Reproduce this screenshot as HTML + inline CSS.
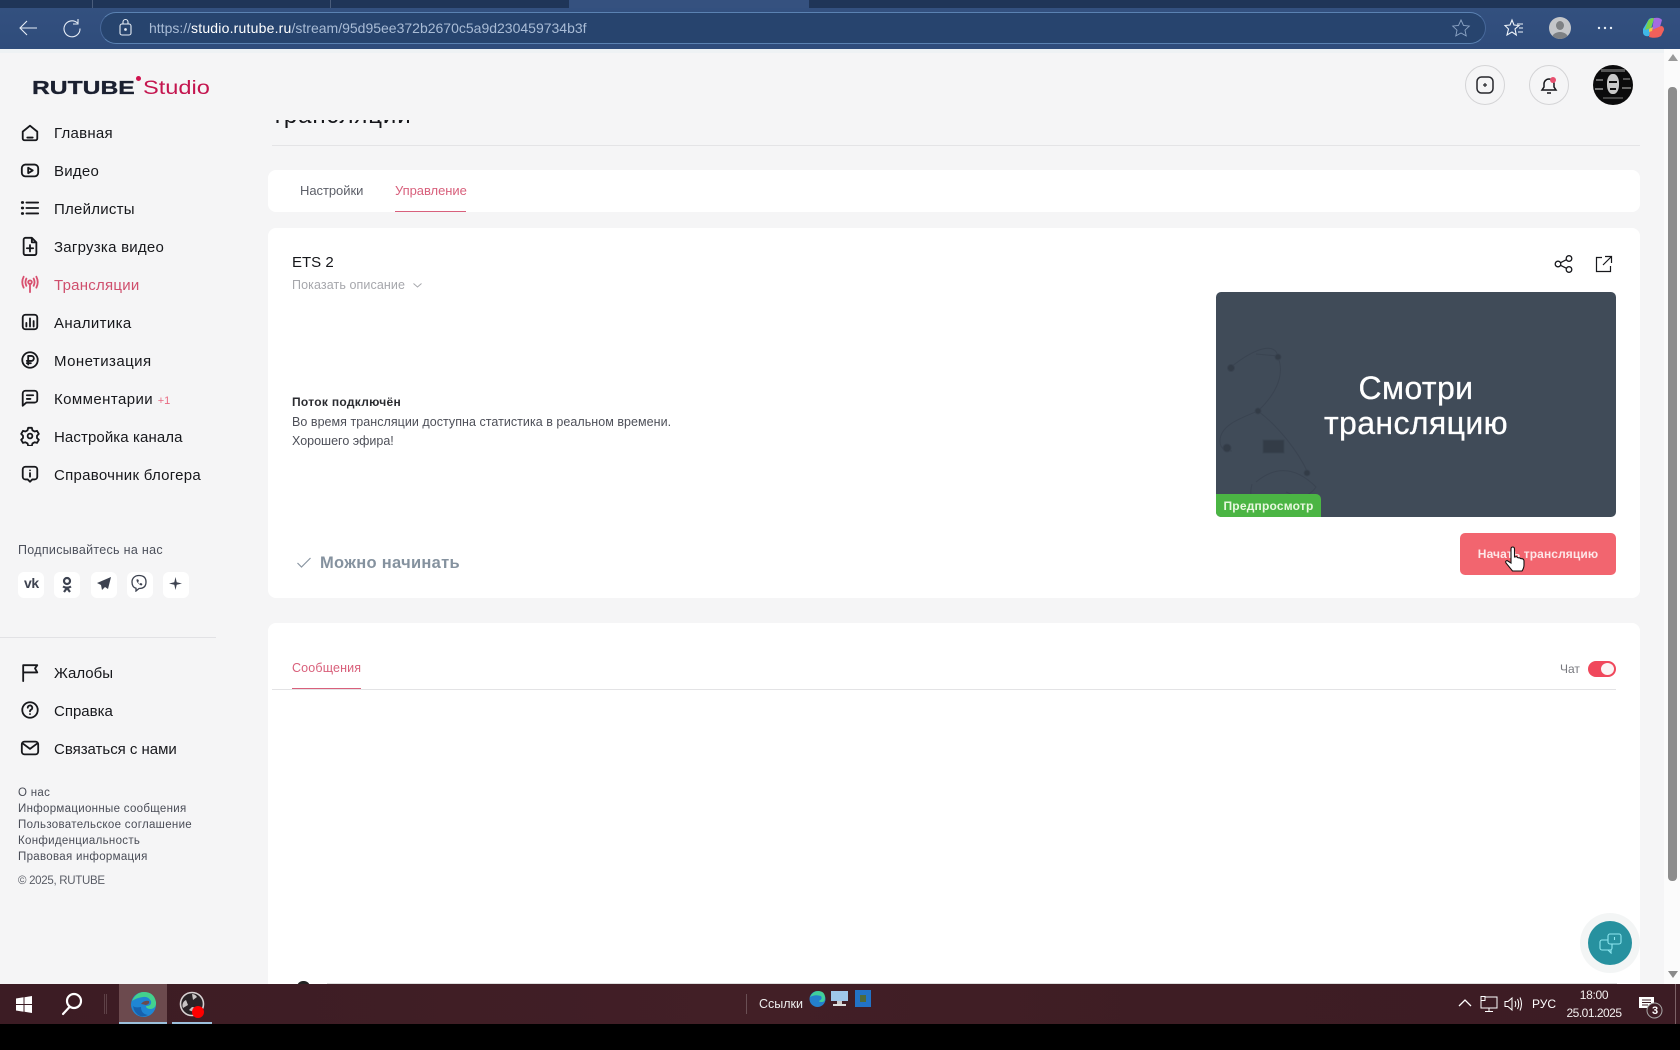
<!DOCTYPE html>
<html lang="ru"><head><meta charset="utf-8"><title>RUTUBE Studio</title>
<style>
*{box-sizing:border-box}
html,body{margin:0;padding:0;width:1680px;height:1050px;overflow:hidden;background:#f5f5f6;font-family:"Liberation Sans","Noto Sans CJK SC",sans-serif}
.a{position:absolute;white-space:nowrap}
.t{position:absolute;white-space:nowrap;line-height:20px;height:20px}
.nav{font-size:15px;color:#17181c;left:54px;letter-spacing:.25px}
.ic{position:absolute;left:20px;width:20px;height:20px;fill:none;stroke:#17181c;stroke-width:2;stroke-linecap:round;stroke-linejoin:round}
.foot{font-size:11.5px;color:#4a4d57;left:18px;letter-spacing:.31px}
.soc{position:absolute;top:572px;width:26px;height:26px;background:#fff;border-radius:6px}
.card{position:absolute;left:268px;width:1372px;background:#fff;border-radius:8px}
</style></head><body>
<div class="a" style="left:0;top:0;width:1680px;height:8px;background:#1f3558"></div>
<div class="a" style="left:569px;top:0;width:240px;height:8px;background:#35517f"></div>
<div class="a" style="left:92px;top:0;width:1px;height:8px;background:#4a5d7c"></div>
<div class="a" style="left:330px;top:0;width:1px;height:8px;background:#4a5d7c"></div>
<div class="a" style="left:0;top:8px;width:1680px;height:41px;background:linear-gradient(#33507f,#2f4c7b)"></div>
<div class="a" style="left:100px;top:12px;width:1386px;height:32px;background:#27446e;border:1px solid #5b82b2;border-left-color:#47689a;border-right-color:#47689a;border-radius:16px"></div>
<svg class="a" style="left:16px;top:16px" width="24" height="24" fill="none" stroke="#e6edf6" stroke-width="1.1"><path d="M21 12H4M11 5l-7 7 7 7"/></svg>
<svg class="a" style="left:60px;top:16px" width="24" height="24" fill="none" stroke="#e6edf6" stroke-width="1.100"><path d="M17.500 7a8 8 0 1 0 2.500 5.500M18 3v5h-5"/></svg>
<svg class="a" style="left:117px;top:17px" width="18" height="20" fill="none" stroke="#e6edf6" stroke-width="1.100"><rect x="3" y="7" width="11" height="11" rx="2"/><path d="M6 7V5a2.500 2.500 0 0 1 5 0v2"/><circle cx="8.500" cy="12.500" r=".8" fill="#e6edf6"/></svg>
<div class="t" style="left:149px;top:18px;font-size:14px;color:#a9bcd6;letter-spacing:0">https://<span style="color:#fff;letter-spacing:.2px">studio.rutube.ru</span>/stream/95d95ee372b2670c5a9d230459734b3f</div>
<svg class="a" style="left:1451px;top:18px" width="20" height="20" fill="none" stroke="#8ea6c6" stroke-width=".9"><path d="M10 2l2.500 5.400 5.800.7-4.300 4 1.200 5.800L10 15l-5.200 2.900L6 12.100l-4.300-4 5.800-.7z"/></svg>
<svg class="a" style="left:1503px;top:17px" width="22" height="22" fill="none" stroke="#f0f5fb" stroke-width="1.100"><path d="M9 3l2 5 5 .5-4 3.500 1.300 6L9 15l-5 3 1.500-6L2 8.500 7 8z"/><path d="M14 7h6M16 11h4M15 15h5"/></svg>
<div class="a" style="left:1549px;top:17px;width:22px;height:22px;border-radius:50%;background:#c4c6c9;overflow:hidden"><div class="a" style="left:7px;top:4px;width:8px;height:9px;border-radius:50%;background:#7e8184"></div><div class="a" style="left:3px;top:15px;width:16px;height:12px;border-radius:50%;background:#7e8184"></div></div>
<svg class="a" style="left:1596px;top:24px" width="18" height="8" fill="#eaf0f8"><circle cx="3" cy="4" r="1.200"/><circle cx="9" cy="4" r="1.200"/><circle cx="15" cy="4" r="1.200"/></svg>
<svg class="a" style="left:1641px;top:16px" width="24" height="24"><path d="M2 13 L8 3 q3-2 5 0 L8 20 q-5 1-6-3z" fill="#3fb8e8"/><path d="M7 5 q2-3 6-3 l-3 10 -6 2z" fill="#7ad04a"/><path d="M13 2 q6-1 8 2 l-2 7-8 3z" fill="#a46be0"/><path d="M9 15 l11-5 q3 0 3 4 l-3 6 q-5 3-12 1z" fill="#f0605a"/><path d="M8 13 l4-2 -1 4 -3 1z" fill="#f2c744"/></svg>

<div class="a" style="left:0;top:49px;width:1680px;height:4px;background:#eef2f4"></div>
<!-- scrollbar -->
<div class="a" style="left:1664px;top:49px;width:16px;height:935px;background:#fbfbfb"></div>
<div class="a" style="left:1668px;top:87px;width:9px;height:794px;border-radius:4px;background:#8d8d8d"></div>
<svg class="a" style="left:1667px;top:53px" width="12" height="9" fill="#9a9a9a"><path d="M1 8 6 1l5 7z"/></svg>
<svg class="a" style="left:1667px;top:970px" width="12" height="9" fill="#8a8a8a"><path d="M1 1l5 7 5-7z"/></svg>

<!-- logo -->
<div class="t" style="left:32px;top:76px;height:24px;line-height:24px;font-size:18px;font-weight:700;color:#1b2030;transform:scaleX(1.37);transform-origin:left;-webkit-text-stroke:.3px #1b2030">RUTUBE</div>
<div class="t" style="left:143px;top:75.500px;height:24px;line-height:24px;font-size:19.500px;color:#c4154f;transform:scaleX(1.21);transform-origin:left">Studio</div>
<div class="a" style="left:135.500px;top:75.500px;width:5px;height:5px;border-radius:50%;background:#d0124e"></div>

<!-- header buttons -->
<div class="a" style="left:1465px;top:65px;width:40px;height:40px;border-radius:50%;border:1px solid #d4d4d6"></div>
<svg class="a" style="left:1475px;top:75px" width="20" height="20" fill="none" stroke="#26272c" stroke-width="1.500"><rect x="2" y="2" width="16" height="16" rx="4.500"/><path d="M8 10h4M10 8v4" stroke-width="1.200"/></svg>
<div class="a" style="left:1529px;top:65px;width:40px;height:40px;border-radius:50%;border:1px solid #d4d4d6"></div>
<svg class="a" style="left:1539px;top:75px" width="20" height="20" fill="none" stroke="#16171b" stroke-width="1.500"><path d="M3 15h14l-2-3V9a5 5 0 0 0-10 0v3zM8 18h4"/><circle cx="14" cy="5" r="3" fill="#e8506f" stroke="none"/></svg>
<div class="a" style="left:1593px;top:65px;width:40px;height:40px;border-radius:50%;background:#0b0b0c;overflow:hidden">
<div class="a" style="left:14px;top:9px;width:12px;height:20px;border-radius:45%;background:#c9c9c9"></div>
<div class="a" style="left:8px;top:4px;width:24px;height:3px;background:#555"></div>
<div class="a" style="left:16px;top:16px;width:8px;height:2px;background:#111"></div>
<div class="a" style="left:17px;top:23px;width:6px;height:2px;background:#111"></div>
<div class="a" style="left:3px;top:14px;width:7px;height:2px;background:#666"></div>
<div class="a" style="left:2px;top:23px;width:8px;height:2px;background:#777"></div>
<div class="a" style="left:30px;top:13px;width:7px;height:2px;background:#555"></div>
<div class="a" style="left:29px;top:22px;width:9px;height:2px;background:#666"></div>
<div class="a" style="left:10px;top:32px;width:20px;height:2px;background:#444"></div>
</div>

<!-- sidebar nav -->
<svg class="ic" style="top:123px" viewBox="0 0 22 22"><path d="M3 9.500 11 3l8 6.500V17a2 2 0 0 1-2 2H5a2 2 0 0 1-2-2zM8 16h6"/></svg>
<div class="t nav" style="top:124px">Главная</div>
<svg class="ic" style="top:160px" viewBox="0 0 22 22"><rect x="2" y="5" width="18" height="13" rx="4"/><path d="M9 8.500v6l5-3z"/></svg>
<div class="t nav" style="top:162px">Видео</div>
<svg class="ic" style="top:198px" viewBox="0 0 22 22"><path d="M7 5h13M7 11h13M7 17h13"/><path d="M2.500 5h.5M2.500 11h.5M2.500 17h.5" stroke-width="3"/></svg>
<div class="t nav" style="top:200px">Плейлисты</div>
<svg class="ic" style="top:236px" viewBox="0 0 22 22"><path d="M4 4a2 2 0 0 1 2-2h7l5 5v12a2 2 0 0 1-2 2H6a2 2 0 0 1-2-2zM13 2v5h5M11 10v7M7.500 13.500h7"/></svg>
<div class="t nav" style="top:238px">Загрузка видео</div>
<svg class="ic" style="top:274px;stroke:#d8506f" viewBox="0 0 22 22"><circle cx="11" cy="9" r="2"/><path d="M11 11v9M7 5q-2 4 0 8M15 5q2 4 0 8M4 3q-3 6 0 12M18 3q3 6 0 12"/></svg>
<div class="t nav" style="top:276px;color:#cf4f6d">Трансляции</div>
<svg class="ic" style="top:312px" viewBox="0 0 22 22"><rect x="3" y="3" width="16" height="16" rx="3"/><path d="M7 16v-4M11 16V7M15 16v-6"/></svg>
<div class="t nav" style="top:314px;letter-spacing:.37px">Аналитика</div>
<svg class="ic" style="top:350px" viewBox="0 0 22 22"><circle cx="11" cy="11" r="8.500"/><path d="M9 16V6.500h3.500a2.700 2.700 0 0 1 0 5.500H7.500M7.500 14.500H12"/></svg>
<div class="t nav" style="top:352px;letter-spacing:.44px">Монетизация</div>
<svg class="ic" style="top:388px" viewBox="0 0 22 22"><path d="M3 6a3 3 0 0 1 3-3h10a3 3 0 0 1 3 3v7a3 3 0 0 1-3 3H7l-4 3.500zM7.500 8h7M7.500 12h4"/></svg>
<div class="t nav" style="top:390px;letter-spacing:.42px">Комментарии <span style="font-size:11px;color:#e86a82;margin-left:0;letter-spacing:0">+1</span></div>
<svg class="ic" style="top:426px" viewBox="0 0 22 22"><path d="M9 2.500h4l.7 2.700 2.300 1.300 2.700-.7 2 3.400-2 2v2.600l2 1.900-2 3.400-2.700-.7-2.300 1.300-.7 2.600H9l-.7-2.600-2.300-1.300-2.700.7-2-3.400 2-2v-2.500l-2-2 2-3.400 2.700.7 2.300-1.300z" transform="translate(0 -.500)"/><circle cx="11" cy="11" r="2.600"/></svg>
<div class="t nav" style="top:428px;letter-spacing:.1px">Настройка канала</div>
<svg class="ic" style="top:464px" viewBox="0 0 22 22"><path d="M6 3h10a3 3 0 0 1 3 3v8a3 3 0 0 1-3 3h-2.500L11 19.500 8.500 17H6a3 3 0 0 1-3-3V6a3 3 0 0 1 3-3zM11 10v4M11 7h.01"/></svg>
<div class="t nav" style="top:466px;letter-spacing:.28px">Справочник блогера</div>

<div class="t" style="left:18px;top:540px;font-size:12.500px;color:#4c505b;letter-spacing:.3px">Подписывайтесь на нас</div>
<div class="soc" style="left:18px"></div><div class="soc" style="left:54px"></div><div class="soc" style="left:91px"></div><div class="soc" style="left:127px"></div><div class="soc" style="left:163px"></div>
<div class="t" style="left:24px;top:573px;font-size:14px;font-weight:700;color:#3d4250;letter-spacing:-.4px">vk</div>
<svg class="a" style="left:61px;top:576px" width="12" height="17" fill="none" stroke="#3d4250" stroke-width="2.200"><circle cx="6" cy="5" r="3"/><path d="M2 10.500q4 2.500 8 0M6 12l-3 4M6 12l3 4"/></svg>
<svg class="a" style="left:96px;top:576px" width="16" height="15" fill="#3d4250"><path d="M15 1 1 7l4 2 1 5 3-3 3 2z"/></svg>
<svg class="a" style="left:130px;top:574px" width="18" height="18" fill="none" stroke="#3d4250" stroke-width="1.300"><path d="M9 1.500c4.500 0 7 2 7 6.500s-2.500 6.500-7 6.500L6 17v-2.700C3 13.500 2 11.500 2 8s2.500-6.500 7-6.500z"/><path d="M6.500 5.500q-.5 3 4.500 6q2-.5 1-2l-1.500-.5-1 1q-1-.7-1.500-2l1-1-1-1.700q-1 0-1.500.2z" fill="#3d4250" stroke="none"/></svg>
<svg class="a" style="left:169px;top:577px" width="13" height="13" fill="#3d4250"><path d="M6.500 0 7.700 5.300 13 6.500 7.700 7.700 6.500 13 5.300 7.700 0 6.500 5.300 5.300z"/></svg>
<div class="a" style="left:0;top:637px;width:216px;height:1px;background:#e2e2e5"></div>

<svg class="ic" style="top:662px" viewBox="0 0 22 22"><path d="M3.500 21V3.500h15.500l-2.500 3.500 2.500 4.500H3.500"/></svg>
<div class="t nav" style="top:664px;letter-spacing:0">Жалобы</div>
<svg class="ic" style="top:700px" viewBox="0 0 22 22"><circle cx="11" cy="11" r="8.500"/><path d="M8.500 8.500a2.500 2.500 0 1 1 3.500 2.300q-1 .5-1 1.700M11 15.500h.01"/></svg>
<div class="t nav" style="top:702px;letter-spacing:0">Справка</div>
<svg class="ic" style="top:738px" viewBox="0 0 22 22"><rect x="2" y="4" width="18" height="14" rx="3"/><path d="M3 6l8 6 8-6"/></svg>
<div class="t nav" style="top:740px;letter-spacing:-.02px">Связаться с нами</div>
<div class="t foot" style="top:783px">О нас</div>
<div class="t foot" style="top:799px">Информационные сообщения</div>
<div class="t foot" style="top:815px">Пользовательское соглашение</div>
<div class="t foot" style="top:831px">Конфиденциальность</div>
<div class="t foot" style="top:847px">Правовая информация</div>
<div class="t foot" style="top:871px;color:#5a5d66;letter-spacing:-.3px">© 2025, RUTUBE</div>

<!-- title clipped -->
<div class="a" style="left:272px;top:120px;width:150px;height:10px;overflow:hidden"><div class="t" style="left:0;top:-19px;height:30px;line-height:30px;font-size:24px;color:#15161a;letter-spacing:.9px">трансляции</div></div>
<div class="a" style="left:272px;top:145px;width:1368px;height:1px;background:#e4e4e6"></div>

<div class="card" style="top:170px;height:42px"></div>
<div class="t" style="left:300px;top:181px;font-size:13px;color:#5c5f68;letter-spacing:-.05px">Настройки</div>
<div class="t" style="left:395px;top:181px;font-size:13px;color:#d8607c;letter-spacing:-.05px">Управление</div>
<div class="a" style="left:395px;top:211px;width:71px;height:1px;background:#d8607c"></div>

<div class="card" style="top:228px;height:370px"></div>
<div class="t" style="left:292px;top:252.500px;font-size:15px;color:#15161a">ETS 2</div>
<div class="t" style="left:292px;top:275px;font-size:12.500px;color:#a6a7ac;letter-spacing:.1px">Показать описание</div>
<svg class="a" style="left:412px;top:282px" width="11" height="7" fill="none" stroke="#a6a7ac" stroke-width="1"><path d="M1.500 1.500 5.500 5l4-3.500"/></svg>
<svg class="a" style="left:1554px;top:254px" width="20" height="20" fill="none" stroke="#17181c" stroke-width="1.300"><circle cx="4" cy="10" r="2.800"/><circle cx="15" cy="4.500" r="2.800"/><circle cx="15" cy="15.500" r="2.800"/><path d="M6.500 8.700 12.500 5.700M6.500 11.300 12.500 14.300"/></svg>
<svg class="a" style="left:1595px;top:255px" width="18" height="18" fill="none" stroke="#17181c" stroke-width="1.200"><path d="M7 2.500H1.500v14h14V11M10 1.500h6.500V8M16.500 1.500 8 10"/></svg>

<div class="a" style="left:1216px;top:292px;width:400px;height:225px;background:#404b58;border-radius:5px;overflow:hidden">
<svg class="a" style="left:0;top:50px" width="110" height="175" fill="none" stroke="#3a4451" stroke-width="1"><path d="M15 25C40 5 60 0 62 15c8 20-5 40-20 54-20 8-38 15-38 30 0 10 8 10 12 10M42 69c20 15 40 40 50 62M62 14 40 12M40 140q30-25 60 5q-10 15-30 5M36 142q-5 20 10 30"/><circle cx="15" cy="26" r="3.500" fill="#333c47"/><circle cx="62" cy="15" r="3" fill="#333c47"/><circle cx="42" cy="69" r="3" fill="#333c47"/><circle cx="11" cy="106" r="4" fill="#333c47"/><circle cx="91" cy="131" r="3" fill="#333c47"/><rect x="47" y="98" width="21" height="13" fill="#333c47"/></svg>
<div class="t" style="left:0;width:400px;text-align:center;top:76px;height:40px;line-height:40px;font-size:32px;letter-spacing:.4px;color:#fff;-webkit-text-stroke:.3px #fff">Смотри</div>
<div class="t" style="left:0;width:400px;text-align:center;top:111px;height:40px;line-height:40px;font-size:32px;letter-spacing:.4px;color:#fff;-webkit-text-stroke:.3px #fff">трансляцию</div>
<div class="a" style="left:0;top:202px;width:105px;height:23px;background:#4bb544;border-radius:0 5px 0 0;color:#e8f8df;font-size:12px;font-weight:700;line-height:24px;text-align:center;letter-spacing:.2px">Предпросмотр</div>
</div>

<div class="t" style="left:292px;top:392px;font-size:12px;font-weight:700;color:#2a2b30;letter-spacing:.3px">Поток подключён</div>
<div class="t" style="left:292px;top:412px;font-size:12.500px;color:#4e5059;letter-spacing:.04px">Во время трансляции доступна статистика в реальном времени.</div>
<div class="t" style="left:292px;top:431px;font-size:12.500px;color:#4e5059;letter-spacing:0">Хорошего эфира!</div>
<svg class="a" style="left:296px;top:556px" width="16" height="13" fill="none" stroke="#8a96a2" stroke-width="1.200"><path d="M1.500 7 5.500 11 14.500 2"/></svg>
<div class="t" style="left:320px;top:553px;font-size:16.500px;font-weight:700;color:#7f8d9a;letter-spacing:.3px;opacity:.95">Можно начинать</div>
<div class="a" style="left:1460px;top:533px;width:156px;height:42px;background:#f2656f;border-radius:5px"></div>
<div class="t" style="left:1460px;width:156px;text-align:center;top:544px;font-size:12px;font-weight:700;color:#fde7e8;letter-spacing:.1px">Начать трансляцию</div>
<svg class="a" style="left:1503px;top:546px" width="24" height="30"><path d="M8 3q0-2 1.700-2T11.500 3v8l1-.2q1.500-.3 2 .7l1 .3q1.500-.2 2 .7l1 .2q2-.2 2.500 2V19q0 3-2 6H9.500L3 17q-1-2 1-2.500l4 2.500z" fill="#fff" stroke="#111" stroke-width="1.100"/></svg>

<div class="card" style="top:623px;height:361px;border-radius:8px 8px 0 0"></div>
<div class="t" style="left:292px;top:658px;font-size:12.500px;color:#d9607b;letter-spacing:.15px">Сообщения</div>
<div class="a" style="left:292px;top:688px;width:69px;height:1px;background:#d9607b"></div>
<div class="a" style="left:272px;top:689px;width:1344px;height:1px;background:#e3e3e5"></div>
<div class="t" style="left:1560px;top:659px;font-size:12px;color:#77787e">Чат</div>
<div class="a" style="left:1588px;top:661px;width:28px;height:16px;border-radius:8px;background:#f0485c"></div>
<div class="a" style="left:1601px;top:663px;width:13px;height:12px;border-radius:50%;background:#fbf5f5"></div>
<div class="a" style="left:1580px;top:913px;width:60px;height:60px;border-radius:50%;background:#f3f5f5"></div>
<div class="a" style="left:1588px;top:921px;width:44px;height:44px;border-radius:50%;background:#27919f"></div>
<svg class="a" style="left:1599px;top:933px" width="23" height="21" fill="none" stroke="#8fe8f0" stroke-width="1.100"><rect x="1" y="7" width="12" height="10" rx="2"/><rect x="9" y="1" width="13" height="10" rx="2" fill="#27919f"/><path d="M15.500 4v3M15.500 8.500h.01M12 17v3l-3-3"/></svg>
<div class="a" style="left:297px;top:981px;width:13px;height:6px;border-radius:6px 6px 0 0;background:#222"></div>
<div class="a" style="left:327px;top:983px;width:1290px;height:1px;background:#dedede"></div>

<!-- taskbar -->
<div class="a" style="left:0;top:984px;width:1680px;height:40px;background:linear-gradient(90deg,#3c1c24,#421f26 45%,#3e1d24 70%,#3c1c24)"></div>
<div class="a" style="left:0;top:1024px;width:1680px;height:26px;background:#000"></div>
<svg class="a" style="left:16px;top:996px" width="17" height="17" fill="#fff"><path d="M0 2.500 7.500 1.300V8H0zM8.500 1.200 16 0v8H8.500zM0 9h7.500v6.700L0 14.500zM8.500 9H16v8l-7.500-1.200z"/></svg>
<svg class="a" style="left:60px;top:992px" width="24" height="24" fill="none" stroke="#fff" stroke-width="2.200"><circle cx="14" cy="9" r="7"/><path d="M9.500 15 3 22" stroke-linecap="round"/></svg>
<div class="a" style="left:104px;top:994px;width:3px;height:20px;border-left:1px solid #5e4147;border-right:1px solid #5e4147"></div>
<div class="a" style="left:119px;top:984px;width:48px;height:40px;background:#6c4a4e"></div>
<div class="a" style="left:119px;top:1022px;width:48px;height:2px;background:#9cc0dc"></div>
<div class="a" style="left:172px;top:1022px;width:40px;height:2px;background:#9cc0dc"></div>
<svg class="a" style="left:130px;top:991px" width="27" height="27"><circle cx="13.500" cy="13.500" r="12.500" fill="#1f86d4"/><path d="M2 10Q6 1 14 1q10 0 12 10 .5 6-5 7-5 0-5-3 6 0 5-5-3-5-8-4-7 1-11 4z" fill="#43d18e"/><path d="M11 16q0 7 7 8-4 2-8 1-6-3-7-10 2 2 8 1z" fill="#1761ad"/><path d="M11 13q3-4 8-3 1 3-3 4-4-1-5-1z" fill="#6c4a4e"/></svg>
<svg class="a" style="left:179px;top:990px" width="28" height="28"><circle cx="13" cy="14" r="11.500" fill="#2a2326" stroke="#d8d2d2" stroke-width="1.600"/><path d="M13 4a6 6 0 0 1 5 3l-4 3zM4 18a6 6 0 0 1 3-8l2 5zM19 18a6 6 0 0 1-9 2l3-3z" fill="#c8c4c4"/><circle cx="19" cy="22" r="6" fill="#f00"/></svg>
<div class="a" style="left:746px;top:994px;width:1px;height:20px;background:#6a4f54"></div>
<div class="t" style="left:759px;top:994px;font-size:12.500px;color:#eee">Ссылки</div>
<svg class="a" style="left:809px;top:990px" width="17" height="18"><circle cx="8.500" cy="9" r="8" fill="#2480cc"/><path d="M1 7Q4 1 9 1q7 0 7 7 0 4-3 4-3 0-3-1 4-2 2-5-6-2-11 1z" fill="#41cf9a"/></svg>
<svg class="a" style="left:831px;top:991px" width="17" height="16"><rect width="17" height="10" fill="#9fc7ea"/><rect x="6" y="10" width="5" height="3" fill="#ccc"/><rect x="2" y="13" width="13" height="2" fill="#ddd"/></svg>
<svg class="a" style="left:855px;top:990px" width="16" height="17"><rect width="16" height="17" fill="#2273c6"/><rect x="5" y="5" width="6" height="7" fill="#4f6a3a"/></svg>
<svg class="a" style="left:1458px;top:998px" width="14" height="10" fill="none" stroke="#fff" stroke-width="1.300"><path d="M1 8 7 2l6 6"/></svg>
<svg class="a" style="left:1480px;top:995px" width="18" height="18" fill="none" stroke="#fff" stroke-width="1"><path d="M5 2h12v11H1V6M9 13v3M5 16.500h8"/><rect x="1" y="1.500" width="4" height="4" fill="#3e1d24"/></svg>
<svg class="a" style="left:1504px;top:995px" width="18" height="18" fill="none" stroke="#fff" stroke-width="1"><path d="M1 6.500h3L8 3v12l-4-3.500H1zM11 6q1.500 3 0 6M13.500 4q2.500 5 0 10M16 2.500q3 6.500 0 13"/></svg>
<div class="t" style="left:1532px;top:994px;font-size:12px;color:#fff">РУС</div>
<div class="t" style="left:1560px;width:68px;text-align:center;top:985px;font-size:12px;letter-spacing:-.3px;color:#f3efef">18:00</div>
<div class="t" style="left:1560px;width:68px;text-align:center;top:1003px;font-size:12px;letter-spacing:-.5px;color:#f3efef">25.01.2025</div>
<svg class="a" style="left:1638px;top:995px" width="26" height="26"><path d="M1 2h15v11h-4l-3 3v-3H1z" fill="#fff"/><path d="M4 5h9M4 7.500h9M4 10h6" stroke="#3e1d24"/><circle cx="16.500" cy="15.500" r="7.500" fill="#3e1d24" stroke="#aaa"/></svg>
<div class="t" style="left:1649px;top:1001px;width:12px;text-align:center;font-size:11px;font-weight:700;color:#fff">3</div>
<div class="a" style="left:1675px;top:984px;width:1px;height:40px;background:#7c6267"></div>
</body></html>
